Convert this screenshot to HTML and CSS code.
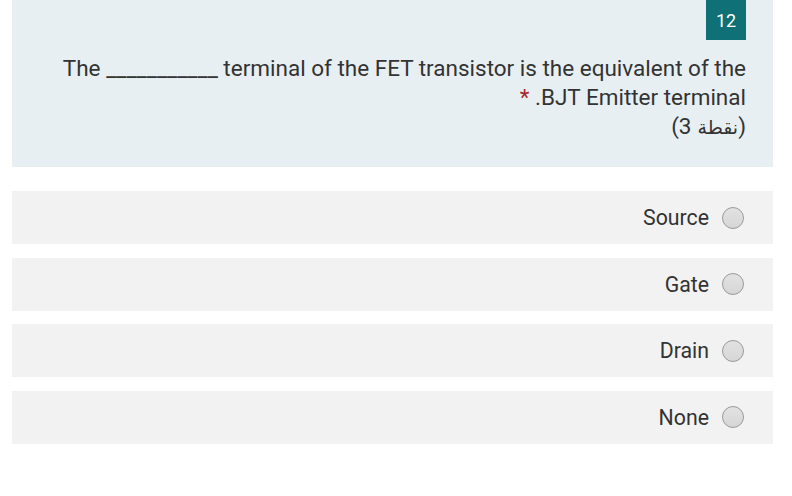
FILE: index.html
```html
<!DOCTYPE html>
<html lang="ar" dir="rtl">
<head>
<meta charset="utf-8">
<link rel="stylesheet" href="styles.css">
</head>
<body>
<div class="page">
  <section class="question">
    <div class="badge">12</div>
    <p class="q-text">The ___________ terminal of the FET transistor is the equivalent of the BJT Emitter terminal. <span class="req">*</span></p>
    <p class="points" dir="ltr"><span class="pt-num">(3</span><span class="ar">نقطة</span><span>)</span></p>
  </section>
  <div class="options">
    <label class="option"><span class="radio"></span><span class="opt-text">Source</span></label>
    <label class="option"><span class="radio"></span><span class="opt-text">Gate</span></label>
    <label class="option"><span class="radio"></span><span class="opt-text">Drain</span></label>
    <label class="option"><span class="radio"></span><span class="opt-text">None</span></label>
  </div>
</div>
</body>
</html>
```
FILE: styles.css
```css
html, body {
  margin: 0;
  padding: 0;
  background: #ffffff;
}
body {
  font-family: Roboto, "Noto Sans", "Liberation Sans", sans-serif;
  color: #333333;
}
.page {
  width: 761px;
  margin-left: 12px;
  margin-right: auto;
}
.question {
  background: #e8eff2;
  padding: 0 27px 25px 27px;
  display: flex;
  flex-direction: column;
  align-items: flex-start;
}
.badge {
  background: #0f7076;
  color: #ffffff;
  width: 40px;
  height: 40px;
  display: flex;
  align-items: center;
  justify-content: center;
  font-size: 18px;
  margin-bottom: 14px;
}
.q-text {
  margin: 0;
  font-size: 22.5px;
  line-height: 29px;
  text-align: right;
  width: 100%;
}
.points {
  margin: 0;
  font-size: 22.5px;
  line-height: 29px;
  width: 100%;
  display: flex;
  justify-content: flex-end;
  align-items: baseline;
}
.pt-num {
  margin-right: 6px;
}
.ar {
  font-family: "DejaVu Sans", sans-serif;
  font-size: 19px;
}
.req {
  color: #a4262c;
}
.options {
  display: flex;
  flex-direction: column;
  gap: 13.5px;
  margin-top: 24px;
}
.option {
  background: #f2f2f2;
  height: 53px;
  display: flex;
  align-items: center;
  padding-right: 29px;
  gap: 13px;
}
.radio {
  width: 20px;
  height: 20px;
  border-radius: 50%;
  border: 1px solid #9a9a9a;
  background: linear-gradient(#e2e2e2, #d6d6d6);
  flex: none;
}
.opt-text {
  font-size: 21.3px;
  color: #333333;
}
```
